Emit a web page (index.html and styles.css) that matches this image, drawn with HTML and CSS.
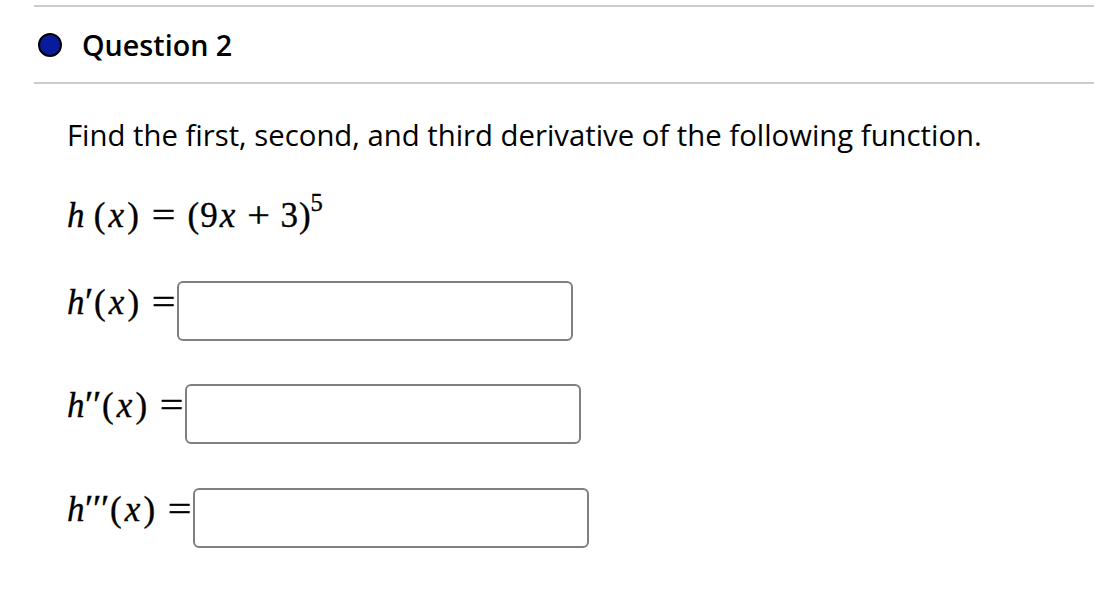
FILE: index.html
```html
<!DOCTYPE html>
<html>
<head>
<meta charset="utf-8">
<link rel="stylesheet" href="styles.css">
</head>
<body>
<div class="question">
  <div class="q-header">
    <span class="dot"></span>
    <span class="q-title">Question 2</span>
  </div>
  <div class="q-body">
    <p class="prompt">Find the first, second, and third derivative of the following function.</p>
    <div class="math math-line"><span class="g v w-h">h</span><span class="g thin"></span><span class="g w-p">(</span><span class="g v w-x">x</span><span class="g w-p">)</span><span class="g eq">=</span><span class="g w-p">(</span><span class="g w-d">9</span><span class="g v w-x">x</span><span class="g plus">+</span><span class="g w-d">3</span><span class="g w-p">)</span><sup class="sup">5</sup></div>
    <div class="answer-row">
      <span class="math label"><span class="g v w-h">h</span><span class="primes"><span class="g prime">′</span></span><span class="g w-p">(</span><span class="g v w-x">x</span><span class="g w-p">)</span><span class="g eq eq-end">=</span></span>
      <span class="box"></span>
    </div>
    <div class="answer-row">
      <span class="math label"><span class="g v w-h">h</span><span class="primes"><span class="g prime">′</span><span class="g prime">′</span></span><span class="g w-p">(</span><span class="g v w-x">x</span><span class="g w-p">)</span><span class="g eq eq-end">=</span></span>
      <span class="box"></span>
    </div>
    <div class="answer-row">
      <span class="math label"><span class="g v w-h">h</span><span class="primes"><span class="g prime">′</span><span class="g prime">′</span><span class="g prime">′</span></span><span class="g w-p">(</span><span class="g v w-x">x</span><span class="g w-p">)</span><span class="g eq eq-end">=</span></span>
      <span class="box"></span>
    </div>
  </div>
</div>
</body>
</html>
```
FILE: styles.css
```css
html, body {
  margin: 0;
  padding: 0;
  background: #ffffff;
}

.question {
  margin: 5px 0 0 34px;
  border-top: 2px solid #cccccc;
  font-family: "Open Sans", "Liberation Sans", sans-serif;
  color: #000;
}

.q-header {
  height: 75px;
  display: flex;
  align-items: center;
  border-bottom: 2px solid #cccccc;
  gap: 20px;
  padding-left: 4px;
}

.dot {
  width: 20px;
  height: 20px;
  border-radius: 50%;
  background: #0a1a9c;
  border: 2px solid #000;
  flex: none;
  margin-top: 1px;
}

.q-title {
  font-size: 28.7px;
  font-weight: 600;
  line-height: 36px;
}

.q-body {
  padding-left: 33px;
}

.prompt {
  margin: 31px 0 0 0;
  font-size: 29.3px;
  line-height: 40px;
}

.math {
  font-family: "Liberation Serif", "DejaVu Serif", serif;
  font-size: 35px;
  line-height: 44px;
  white-space: nowrap;
  -webkit-text-stroke: 0.35px #000;
}

.g {
  display: inline-block;
  font-style: normal;
}

.v {
  font-style: italic;
}

.w-h {
  width: 20px;
  text-align: left;
}

.w-x {
  width: 20px;
  text-align: center;
}

.w-p {
  width: 13.6px;
  text-align: center;
}

.w-d {
  width: 17.5px;
  text-align: center;
}

.thin {
  width: 5.8px;
}

.eq {
  width: 27.2px;
  margin: 0 9.7px;
  text-align: center;
  transform: scaleX(1.2);
}

.eq-end {
  margin-right: 0;
}

.plus {
  width: 27.2px;
  margin: 0 7.8px;
  text-align: center;
  transform: scaleX(1.15);
}

.math-line {
  margin-top: 38.5px;
  height: 44px;
}

.sup {
  font-size: 24.5px;
  vertical-align: 15.5px;
  line-height: 0;
  margin-left: -1px;
}

.primes {
  display: inline-block;
  margin-left: -2px;
}

.prime {
  width: 8px;
  text-align: center;
  font-size: 38px;
}

.answer-row {
  display: flex;
  align-items: flex-start;
  height: 60px;
  margin-top: 43px;
}

.answer-row + .answer-row {
  margin-top: 43.5px;
}

.label {
  margin-top: -2px;
}

.box {
  display: block;
  width: 392px;
  height: 56px;
  border: 2px solid #808080;
  border-radius: 6px;
  background: #fff;
}
```
